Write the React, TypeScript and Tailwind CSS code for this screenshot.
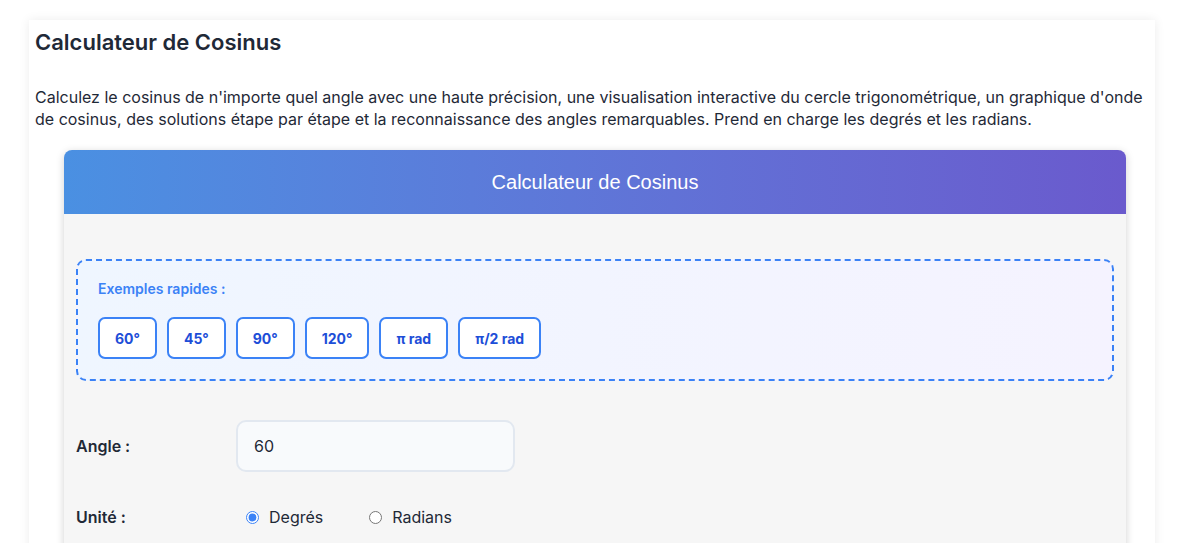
export default function App() {
  const examples = ['60°', '45°', '90°', '120°', 'π rad', 'π/2 rad']

  return (
    <div className="h-[543px] overflow-y-scroll bg-white font-['Inter',sans-serif] text-[#1f2937]">
      <div className="pt-5 pb-10">
        <div className="ml-[29px] w-[1126px] bg-white px-[6px] pt-[8px] pb-10 shadow-[0_0_10px_rgba(0,0,0,0.08)]">
          <h1 className="text-[22px] font-semibold leading-[28px] text-[#1f2937]">Calculateur de Cosinus</h1>
          <p className="mt-[30px] text-[16px] leading-[22px] text-[#1f2937]">
            Calculez le cosinus de n'importe quel angle avec une haute précision, une visualisation interactive du cercle trigonométrique, un graphique d'onde de cosinus, des solutions étape par étape et la reconnaissance des angles remarquables. Prend en charge les degrés et les radians.
          </p>

          <div className="ml-[29px] mt-[20px] w-[1062px] overflow-hidden rounded-t-[8px] bg-[#f6f6f6] shadow-[0_2px_8px_rgba(0,0,0,0.18)]">
            <div className="flex h-[64px] items-center justify-center bg-gradient-to-r from-[#4a90e2] to-[#6a5acd]">
              <h2 className="font-['Liberation_Sans',Arial,sans-serif] text-[20px] font-normal text-white">Calculateur de Cosinus</h2>
            </div>

            <div className="px-[12px] pt-[45px] pb-10">
              <div className="rounded-[10px] border-2 border-dashed border-[#3b82f6] bg-gradient-to-r from-[#eff6ff] to-[#f5f3ff] px-[20px] pt-[18px] pb-[20px]">
                <div className="text-[14px] font-semibold leading-[20px] text-[#3b82f6]">Exemples rapides :</div>
                <div className="mt-[18px] flex gap-[10px]">
                  {examples.map((ex) => (
                    <button
                      key={ex}
                      className="h-[42px] rounded-[7px] border-2 border-[#3b82f6] bg-white px-[15px] text-[14px] font-bold text-[#1d4ed8]"
                    >
                      {ex}
                    </button>
                  ))}
                </div>
              </div>

              <div className="mt-[39px] flex items-center">
                <label className="w-[160px] text-[16px] font-semibold text-[#1f2937]">Angle :</label>
                <input
                  defaultValue="60"
                  className="h-[52px] w-[279px] rounded-[10px] border-2 border-[#e2e8f0] bg-[#f8fafc] px-[16px] text-[16px] text-[#1f2937] outline-none"
                />
              </div>

              <div className="mt-[33px] flex items-center">
                <label className="w-[160px] text-[16px] font-semibold text-[#1f2937]">Unité :</label>
                <label className="ml-[10px] flex items-center gap-[10px] text-[16px] text-[#1f2937]">
                  <input type="radio" name="unit" defaultChecked className="h-[13px] w-[13px] accent-[#3b82f6]" />
                  Degrés
                </label>
                <label className="ml-[46px] flex items-center gap-[10px] text-[16px] text-[#1f2937]">
                  <input type="radio" name="unit" className="h-[13px] w-[13px] accent-[#3b82f6]" />
                  Radians
                </label>
              </div>
              <div className="h-[300px]" />
            </div>
          </div>
        </div>
      </div>
    </div>
  )
}
